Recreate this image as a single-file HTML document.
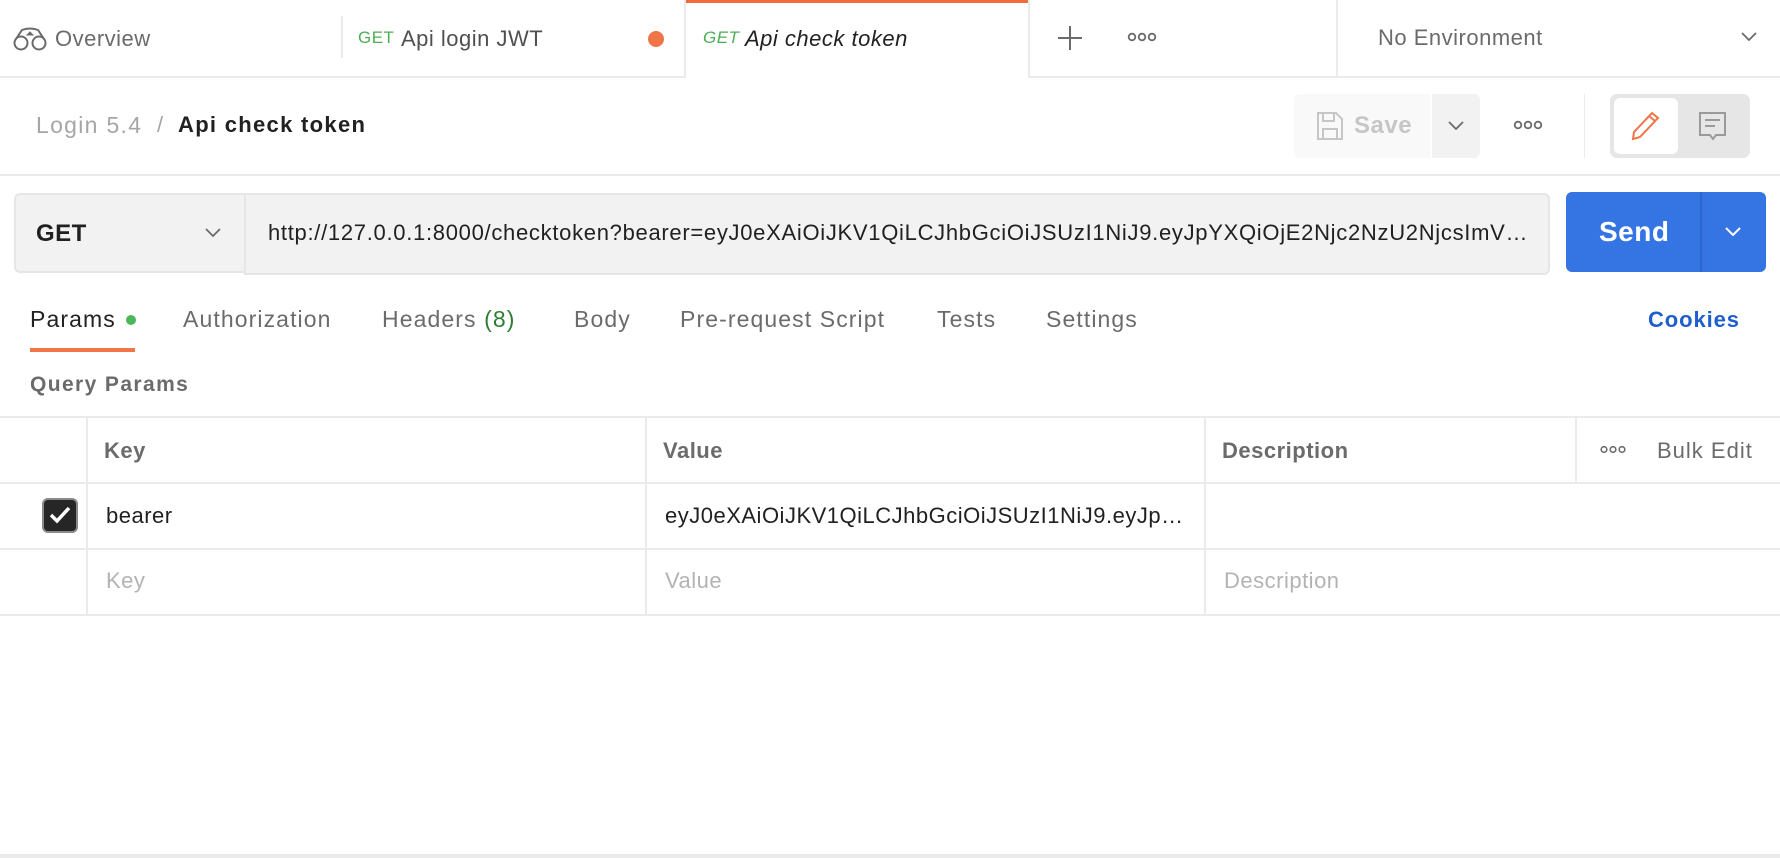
<!DOCTYPE html>
<html><head><meta charset="utf-8">
<style>
*{margin:0;padding:0;box-sizing:border-box}
body{width:1780px;height:858px;background:#fff;font-family:"Liberation Sans",sans-serif;position:relative;overflow:hidden;color:#212121;letter-spacing:0.5px}
.a{position:absolute;white-space:nowrap}
.hl{position:absolute;height:2px;background:#ebebeb}
.vl{position:absolute;width:2px;background:#ebebeb}
.t{font-size:23px;letter-spacing:1.1px;top:306px}
</style></head><body>
<div class="hl" style="left:0;top:76px;width:686px"></div>
<div class="hl" style="left:1028px;top:76px;width:752px"></div>
<div class="vl" style="left:341px;top:16px;height:42px"></div>
<div class="vl" style="left:684px;top:0;height:78px"></div>
<div class="vl" style="left:1028px;top:0;height:78px"></div>
<div class="vl" style="left:1336px;top:0;height:77px"></div>
<div class="a" style="left:686px;top:0;width:342px;height:3px;background:#f26b3a"></div>
<svg class="a" style="left:13px;top:26px" width="34" height="26" viewBox="0 0 34 26" fill="none" stroke="#6b6b6b" stroke-width="2"><circle cx="8" cy="17" r="6.5"/><circle cx="26" cy="17" r="6.5"/><path d="M3 13 L9 4 Q17 1 25 4 L31 13"/><path d="M14 9 L17 6 L20 9 Z" fill="#6b6b6b" stroke-width="1"/></svg>
<div class="a" style="left:55px;top:26px;font-size:22px;color:#6b6b6b">Overview</div>
<div class="a" style="left:358px;top:28px;font-size:17px;color:#4cae55">GET</div>
<div class="a" style="left:401px;top:26px;font-size:22px;color:#505050">Api login JWT</div>
<div class="a" style="left:648px;top:31px;width:16px;height:16px;border-radius:50%;background:#f0764a"></div>
<div class="a" style="left:703px;top:28px;font-size:17px;color:#4cae55;font-style:italic">GET</div>
<div class="a" style="left:745px;top:26px;font-size:22px;color:#212121;font-style:italic">Api check token</div>
<div class="a" style="left:1058px;top:26px;width:24px;height:24px">
 <div style="position:absolute;left:11px;top:0;width:2px;height:24px;background:#6b6b6b"></div>
 <div style="position:absolute;left:0;top:11px;width:24px;height:2px;background:#6b6b6b"></div></div>
<svg class="a" style="left:1127px;top:32px" width="30" height="10"><g fill="none" stroke="#6b6b6b" stroke-width="1.8"><circle cx="5" cy="5" r="3.3"/><circle cx="15" cy="5" r="3.3"/><circle cx="25" cy="5" r="3.3"/></g></svg>
<div class="a" style="left:1378px;top:25px;font-size:22px;color:#6b6b6b">No Environment</div>
<svg class="a" style="left:1740px;top:31px" width="18" height="12"><path d="M2 2 L9 9 L16 2" fill="none" stroke="#6b6b6b" stroke-width="1.8"/></svg>

<div class="a" style="left:36px;top:112px;font-size:23px;letter-spacing:1.3px;color:#a6a6a6">Login 5.4</div>
<div class="a" style="left:157px;top:112px;font-size:22px;color:#a6a6a6">/</div>
<div class="a" style="left:178px;top:112px;font-size:22px;letter-spacing:1.3px;font-weight:bold;color:#212121">Api check token</div>
<div class="a" style="left:1294px;top:94px;width:136px;height:64px;background:#f9f9f9;border-radius:6px 0 0 6px"></div>
<svg class="a" style="left:1316px;top:111px" width="28" height="30" fill="none" stroke="#c6c6c6" stroke-width="2"><path d="M2 2 H20 L26 8 V28 H2 Z"/><path d="M7 2 V10 H18 V2"/><path d="M7 28 V18 H21 V28"/></svg>
<div class="a" style="left:1354px;top:112px;font-size:24px;font-weight:bold;color:#c6c6c6">Save</div>
<div class="a" style="left:1432px;top:94px;width:48px;height:64px;background:#f2f2f2;border-radius:0 6px 6px 0"></div>
<svg class="a" style="left:1447px;top:120px" width="18" height="12"><path d="M2 2 L9 9 L16 2" fill="none" stroke="#6b6b6b" stroke-width="1.8"/></svg>
<svg class="a" style="left:1513px;top:120px" width="30" height="10"><g fill="none" stroke="#6b6b6b" stroke-width="1.8"><circle cx="5" cy="5" r="3.3"/><circle cx="15" cy="5" r="3.3"/><circle cx="25" cy="5" r="3.3"/></g></svg>
<div class="vl" style="left:1584px;top:94px;height:64px;width:1px"></div>
<div class="a" style="left:1610px;top:94px;width:140px;height:64px;background:#e6e6e6;border-radius:7px"></div>
<div class="a" style="left:1614px;top:98px;width:64px;height:56px;background:#fff;border-radius:6px"></div>
<svg class="a" style="left:1630px;top:110px" width="32" height="32" fill="none" stroke="#f0764a" stroke-width="2"><path d="M3 29 L4 22 L22 3 L28 8 L10 27 Z"/><path d="M19 6 L25 11"/></svg>
<svg class="a" style="left:1698px;top:111px" width="30" height="32" fill="none" stroke="#9a9a9a" stroke-width="2"><path d="M2 2 H27 V24 H18 L15 28 L12 24 H2 Z"/><path d="M7 9 H22 M7 15 H17"/></svg>
<div class="hl" style="left:0;top:174px;width:1780px"></div>

<div class="a" style="left:14px;top:193px;width:232px;height:80px;background:#f2f2f2;border:2px solid #e6e6e6;border-right:none;border-radius:6px 0 0 6px"></div>
<div class="a" style="left:36px;top:220px;font-size:24px;font-weight:bold;color:#212121">GET</div>
<svg class="a" style="left:204px;top:227px" width="18" height="12"><path d="M2 2 L9 9 L16 2" fill="none" stroke="#6b6b6b" stroke-width="1.8"/></svg>
<div class="a" style="left:244px;top:193px;width:1306px;height:82px;background:#f2f2f2;border:2px solid #e6e6e6;border-radius:0 6px 6px 0"></div>
<div class="a" style="left:268px;top:220px;width:1262px;overflow:hidden;text-overflow:ellipsis;font-size:22px;letter-spacing:0.7px;color:#212121">http://127.0.0.1:8000/checktoken?bearer=eyJ0eXAiOiJKV1QiLCJhbGciOiJSUzI1NiJ9.eyJpYXQiOjE2Njc2NzU2NjcsImV4cCI6MTY2NzY3OTI2Nw</div>
<div class="a" style="left:1566px;top:192px;width:200px;height:80px;background:#3574e3;border-radius:6px"></div>
<div class="a" style="left:1700px;top:192px;width:2px;height:80px;background:#2d66cc"></div>
<div class="a" style="left:1599px;top:216px;font-size:28px;font-weight:bold;color:#fff">Send</div>
<svg class="a" style="left:1724px;top:226px" width="18" height="12"><path d="M2 2 L9 9 L16 2" fill="none" stroke="#fff" stroke-width="2"/></svg>

<div class="a t" style="left:30px;color:#212121">Params</div>
<div class="a" style="left:126px;top:315px;width:10px;height:10px;border-radius:50%;background:#4cb756"></div>
<div class="a" style="left:30px;top:348px;width:105px;height:4px;background:#f0764a"></div>
<div class="a t" style="left:183px;color:#6b6b6b">Authorization</div>
<div class="a t" style="left:382px;color:#6b6b6b">Headers <span style="color:#2e7d32">(8)</span></div>
<div class="a t" style="left:574px;color:#6b6b6b">Body</div>
<div class="a t" style="left:680px;color:#6b6b6b">Pre-request Script</div>
<div class="a t" style="left:937px;color:#6b6b6b">Tests</div>
<div class="a t" style="left:1046px;color:#6b6b6b">Settings</div>
<div class="a" style="left:1648px;top:307px;font-size:22px;letter-spacing:0.9px;font-weight:bold;color:#1f5fcc">Cookies</div>
<div class="a" style="left:30px;top:373px;font-size:21px;letter-spacing:1.4px;font-weight:bold;color:#6b6b6b">Query Params</div>

<div class="hl" style="left:0;top:416px;width:1780px"></div>
<div class="hl" style="left:0;top:482px;width:1780px"></div>
<div class="hl" style="left:0;top:548px;width:1780px"></div>
<div class="hl" style="left:0;top:614px;width:1780px"></div>
<div class="vl" style="left:86px;top:416px;height:200px"></div>
<div class="vl" style="left:645px;top:416px;height:200px"></div>
<div class="vl" style="left:1204px;top:416px;height:200px"></div>
<div class="vl" style="left:1575px;top:416px;height:66px"></div>
<div class="a" style="left:104px;top:438px;font-size:22px;font-weight:bold;color:#6b6b6b">Key</div>
<div class="a" style="left:663px;top:438px;font-size:22px;font-weight:bold;color:#6b6b6b">Value</div>
<div class="a" style="left:1222px;top:438px;font-size:22px;font-weight:bold;color:#6b6b6b">Description</div>
<svg class="a" style="left:1600px;top:445px" width="26" height="9"><g fill="none" stroke="#6b6b6b" stroke-width="1.6"><circle cx="4" cy="4.5" r="2.8"/><circle cx="13" cy="4.5" r="2.8"/><circle cx="22" cy="4.5" r="2.8"/></g></svg>
<div class="a" style="left:1657px;top:438px;font-size:22px;letter-spacing:1px;color:#6b6b6b">Bulk Edit</div>
<div class="a" style="left:42px;top:498px;width:36px;height:35px;background:#262626;border:2px solid #8a8a8a;border-radius:6px"></div>
<svg class="a" style="left:48px;top:505px" width="24" height="20"><path d="M3 10 L9 16 L21 3" fill="none" stroke="#fff" stroke-width="3.5"/></svg>
<div class="a" style="left:106px;top:503px;font-size:22px;color:#212121">bearer</div>
<div class="a" style="left:665px;top:503px;width:525px;overflow:hidden;text-overflow:ellipsis;font-size:22px;color:#212121">eyJ0eXAiOiJKV1QiLCJhbGciOiJSUzI1NiJ9.eyJpYXQiOjE2</div>
<div class="a" style="left:106px;top:568px;font-size:22px;color:#b3b3b3">Key</div>
<div class="a" style="left:665px;top:568px;font-size:22px;color:#b3b3b3">Value</div>
<div class="a" style="left:1224px;top:568px;font-size:22px;color:#b3b3b3">Description</div>
<div class="hl" style="left:0;top:854px;width:1780px;height:4px"></div>
</body></html>
